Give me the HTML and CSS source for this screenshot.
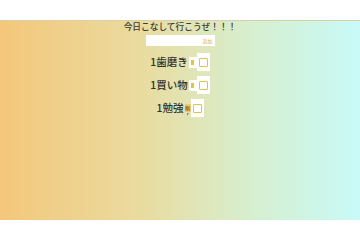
FILE: index.html
```html
<!DOCTYPE html>
<html lang="ja">
<head>
<meta charset="utf-8">
<link rel="stylesheet" href="styles.css">
</head>
<body>
<div class="panel">
  <h1 class="title">今日こなして行こうぜ！！！</h1>
  <form class="add-form">
    <input class="add-input" type="text">
    <button class="add-btn" type="button">追加</button>
  </form>
  <ul class="todo-list">
    <li class="todo">
      <span class="todo-text">1歯磨き</span>
      <span class="del-wrap"><span class="del"></span></span>
      <span class="check-wrap"><span class="check"></span></span>
    </li>
    <li class="todo">
      <span class="todo-text">1買い物</span>
      <span class="del-wrap"><span class="del"></span></span>
      <span class="check-wrap"><span class="check"></span></span>
    </li>
    <li class="todo">
      <span class="todo-text">1勉強</span>
      <span class="del-wrap hover"><span class="del-hover">削</span><span class="cursor"></span></span>
      <span class="check-wrap"><span class="check"></span></span>
    </li>
  </ul>
</div>
</body>
</html>
```
FILE: styles.css
```css
html, body {
  margin: 0;
  padding: 0;
  background: #ffffff;
}
body {
  width: 360px;
  height: 240px;
  font-family: "Noto Sans CJK JP", "Noto Sans", sans-serif;
  color: #333;
}
.panel {
  margin-top: 20px;
  height: 200px;
  background: linear-gradient(to right, #f4c77b 0%, #e9dca0 40%, #d6efd0 70%, #c8faf7 100%);
  border-top: 1px solid #d9cfa8;
  box-sizing: border-box;
  display: flex;
  flex-direction: column;
  align-items: center;
}
.title {
  margin: 0;
  font-size: 8.7px;
  line-height: 12px;
  font-weight: 500;
  color: #3a3a3a;
}
.add-form {
  margin-top: 2px;
  display: flex;
  align-items: center;
  background: #ffffff;
  width: 68px;
  height: 11px;
  padding-left: 1px;
}
.add-input {
  flex: 1;
  min-width: 0;
  height: 11px;
  border: none;
  padding: 0;
  outline: none;
  background: transparent;
}
.add-btn {
  border: none;
  background: transparent;
  padding: 0 2px 0 0;
  font-family: "Noto Sans CJK JP", sans-serif;
  font-size: 5px;
  line-height: 11px;
  color: #d2b44a;
}
.todo-list {
  list-style: none;
  margin: 7px 0 0;
  padding: 0;
  display: flex;
  flex-direction: column;
  align-items: center;
  gap: 5px;
}
.todo {
  display: flex;
  align-items: center;
  height: 18px;
}
.todo-text {
  font-size: 10.5px;
  line-height: 14px;
  font-weight: 500;
  color: #333;
  margin-right: 1px;
}
.del-wrap {
  position: relative;
  display: flex;
  align-items: center;
  justify-content: center;
  width: 8px;
  height: 11px;
  background: #ffffff;
}
.del {
  width: 3px;
  height: 5px;
  background: #e5c43d;
}
.del-wrap.hover {
  width: 6px;
  background: transparent;
}
.del-hover {
  width: 6px;
  height: 8px;
  background: #f2c86a;
  font-size: 5px;
  line-height: 8px;
  text-align: center;
  color: #333;
}
.cursor {
  position: absolute;
  left: 2px;
  top: 10px;
  width: 0;
  height: 0;
  border-left: 2px solid #888;
  border-bottom: 3px solid transparent;
}
.check-wrap {
  display: flex;
  align-items: center;
  justify-content: center;
  width: 13px;
  height: 18px;
  background: #ffffff;
}
.check {
  width: 7px;
  height: 7px;
  border: 1.5px solid #e3c24a;
  border-radius: 1px;
}
```
